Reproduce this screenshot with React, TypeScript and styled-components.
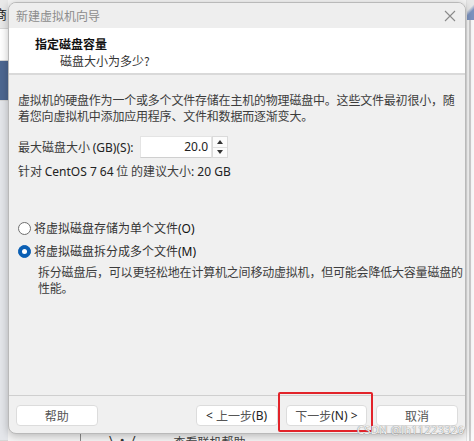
import React from "react";
import styled, { createGlobalStyle } from "styled-components";

const Global = createGlobalStyle`
  html, body { margin: 0; padding: 0; }
  body { background: #eef0f3; font-family: "Noto Sans", "Noto Sans CJK SC", sans-serif; }
`;

const CJK = `"Noto Sans CJK SC", "Noto Sans", sans-serif`;
const LATIN = `"Noto Sans", "DejaVu Sans", "Noto Sans CJK SC", sans-serif`;

const Stage = styled.div`
  position: relative;
  width: 474px;
  height: 441px;
  overflow: hidden;
  background: #f4f4f4;
`;

/* background application fragments (under the dialog) */
const BackApp = styled.div`
  display: grid;
  grid-template-columns: 8px 1fr 8px;
  height: 100%;
`;

const LeftStrip = styled.div`
  display: flex;
  flex-direction: column;
  overflow: hidden;
`;

const StripBlock = styled.div<{ $h: number; $bg: string }>`
  height: ${(p) => p.$h}px;
  background: ${(p) => p.$bg};
  border-bottom: 1px solid #d6d6d6;
  font-family: ${CJK};
  font-size: 13px;
  color: #222;
  line-height: ${(p) => p.$h}px;
  text-indent: -6px;
  white-space: nowrap;
`;

const MidBack = styled.div`
  display: flex;
  flex-direction: column;
  justify-content: flex-end;
  background: #f4f4f4;
`;

const BottomPeek = styled.div`
  display: flex;
  align-items: flex-start;
  height: 7px;
  overflow: visible;
`;

const PeekDivider = styled.div`
  width: 72px;
  border-right: 1px solid #8a8a8a;
  height: 12px;
`;

const PeekIcon = styled.div`
  margin-left: 28px;
  font-family: ${LATIN};
  font-size: 13px;
  line-height: 12px;
  color: #333;
  letter-spacing: 6px;
`;

const PeekText = styled.div`
  margin-left: 32px;
  font-family: ${CJK};
  font-size: 12px;
  line-height: 14px;
  margin-top: 1px;
  color: #444;
`;

const RightStrip = styled.div`
  display: flex;
  flex-direction: column;
  background: #fafafa;
  border-left: 1px solid #e2e2e2;
`;

const RightTop = styled.div`
  height: 20px;
  background: linear-gradient(135deg, #e8e8e8 40%, #7c93c0 60%);
`;

const RightLine = styled.div`
  flex: 1;
  border-right: 2px solid #cfcfcf;
  margin-right: 3px;
`;

/* the dialog window */
const Dialog = styled.div`
  position: absolute;
  left: 8px;
  top: 2px;
  width: 458px;
  height: 432px;
  box-sizing: border-box;
  border: 1px solid #b9b9b9;
  border-radius: 8px;
  overflow: hidden;
  background: #f0f0f0;
  box-shadow: 0 2px 8px rgba(0, 0, 0, 0.25);
  display: flex;
  flex-direction: column;
`;

const TitleBar = styled.div`
  height: 25px;
  display: flex;
  align-items: center;
  justify-content: space-between;
  padding: 0 9px 0 7px;
  background: #eeeeee;
`;

const TitleText = styled.div`
  font-family: ${CJK};
  font-size: 12px;
  color: #8c8c8c;
`;

const CloseIcon = styled.svg`
  width: 12px;
  height: 12px;
`;

const Header = styled.div`
  height: 47px;
  box-sizing: border-box;
  background: #ffffff;
  border-bottom: 2px solid #d9d9d9;
  padding: 7px 0 0 26px;
  display: flex;
  flex-direction: column;
`;

const HeaderTitle = styled.div`
  font-family: ${CJK};
  font-size: 12px;
  font-weight: 700;
  line-height: 17px;
  color: #111;
`;

const HeaderSub = styled.div`
  font-family: ${CJK};
  font-size: 12px;
  line-height: 17px;
  padding-left: 25px;
  color: #333;
`;

const Body = styled.div`
  flex: 1;
  padding: 17px 0 0 9px;
  display: flex;
  flex-direction: column;
  border-bottom: 1px solid #cfcfcf;
`;

const Para = styled.p`
  margin: 0;
  font-family: ${CJK};
  font-size: 12px;
  line-height: 16px;
  letter-spacing: -0.2px;
  color: #3c3c3c;
  white-space: nowrap;
`;

const Mixed = styled.span`
  font-family: ${LATIN};
  font-size: 12px;
  letter-spacing: 0;
  color: #222;
`;

const SizeRow = styled.div`
  margin-top: 12px;
  display: flex;
  align-items: center;
  height: 22px;
`;

const SizeLabel = styled.span`
  font-family: ${CJK};
  font-size: 12px;
  color: #3c3c3c;
  width: 122px;
`;

const Spin = styled.div`
  display: flex;
  height: 22px;
`;

const SpinInput = styled.div`
  width: 72px;
  box-sizing: border-box;
  background: #fff;
  border: 1px solid #e4e4e4;
  border-bottom-color: #cfcfcf;
  font-family: ${LATIN};
  font-size: 12px;
  color: #222;
  text-align: right;
  padding-right: 3px;
  line-height: 20px;
`;

const SpinButtons = styled.div`
  display: flex;
  flex-direction: column;
  width: 16px;
  box-sizing: border-box;
  border: 1px solid #dadada;
  background: #fbfbfb;
`;

const SpinHalf = styled.div`
  flex: 1;
  display: flex;
  align-items: center;
  justify-content: center;
  & + & { border-top: 1px solid #e0e0e0; }
`;

const Arrow = styled.div<{ $up?: boolean }>`
  width: 0;
  height: 0;
  border-left: 3px solid transparent;
  border-right: 3px solid transparent;
  ${(p) => (p.$up ? "border-bottom: 4px solid #333;" : "border-top: 4px solid #333;")}
`;

const Recommend = styled(Para)`
  margin-top: 5px;
  letter-spacing: 0;
`;

const Options = styled.div`
  margin-top: 40px;
  display: flex;
  flex-direction: column;
  gap: 7px;
`;

const RadioRow = styled.label`
  display: flex;
  align-items: center;
  gap: 3px;
  height: 16px;
  font-family: ${CJK};
  font-size: 12px;
  color: #333;
`;

const RadioText = styled.span`
  white-space: nowrap;
`;

const RadioDot = styled.span<{ $on?: boolean }>`
  width: 13px;
  height: 13px;
  box-sizing: border-box;
  border-radius: 50%;
  display: inline-flex;
  align-items: center;
  justify-content: center;
  background: ${(p) => (p.$on ? "#0a5fb4" : "#fff")};
  border: 1px solid ${(p) => (p.$on ? "#0a5fb4" : "#6f6f6f")};
  &::after {
    content: "";
    width: 5px;
    height: 5px;
    border-radius: 50%;
    background: ${(p) => (p.$on ? "#fff" : "transparent")};
  }
`;

const Mnemonic = styled.span`
  font-family: ${LATIN};
  font-size: 12px;
  color: #111;
`;

const Desc = styled(Para)`
  margin-top: 5px;
  padding-left: 20px;
`;

const Footer = styled.div`
  height: 37px;
  box-sizing: border-box;
  padding: 9px 7px 0 7px;
  display: flex;
  align-items: flex-start;
`;

const Btn = styled.div<{ $gap?: number }>`
  width: 82px;
  height: 21px;
  box-sizing: border-box;
  margin-left: ${(p) => p.$gap ?? 0}px;
  background: #ffffff;
  border: 1px solid #dcdcdc;
  border-radius: 4px;
  display: flex;
  align-items: center;
  justify-content: center;
  font-family: ${CJK};
  font-size: 12px;
  color: #555;
  position: relative;
`;

const BtnLatin = styled.span`
  font-family: ${LATIN};
  color: #222;
`;

const Highlight = styled.div`
  position: absolute;
  left: -9px;
  top: -14px;
  width: 95px;
  height: 40px;
  box-sizing: border-box;
  border: 2px solid #e2232a;
  border-radius: 2px;
  pointer-events: none;
`;

const Watermark = styled.div`
  position: absolute;
  right: 10px;
  bottom: 5px;
  font-family: ${LATIN};
  font-size: 11px;
  line-height: 12px;
  color: rgba(255, 255, 255, 0.9);
  text-shadow: 0 0 1px #8a8a8a, 0 0 1px #8a8a8a;
  letter-spacing: 0.3px;
`;

export default function App() {
  return (
    <>
      <Global />
      <Stage>
        <BackApp>
          <LeftStrip>
            <StripBlock $h={28} $bg="#e9e9e9">商</StripBlock>
            <StripBlock $h={31} $bg="#ffffff" />
            <StripBlock $h={40} $bg="#4d6791" />
            <StripBlock $h={342} $bg="#e4e6ea" />
          </LeftStrip>
          <MidBack>
            <BottomPeek>
              <PeekDivider />
              <PeekIcon>\•/</PeekIcon>
              <PeekText>查看联机帮助</PeekText>
            </BottomPeek>
          </MidBack>
          <RightStrip>
            <RightTop />
            <RightLine />
          </RightStrip>
        </BackApp>

        <Dialog>
          <TitleBar>
            <TitleText>新建虚拟机向导</TitleText>
            <CloseIcon viewBox="0 0 12 12">
              <path d="M1 1 L11 11 M11 1 L1 11" stroke="#8a8a8a" strokeWidth="1.1" fill="none" />
            </CloseIcon>
          </TitleBar>
          <Header>
            <HeaderTitle>指定磁盘容量</HeaderTitle>
            <HeaderSub>磁盘大小为多少?</HeaderSub>
          </Header>
          <Body>
            <Para>
              虚拟机的硬盘作为一个或多个文件存储在主机的物理磁盘中。这些文件最初很小，随
              <br />
              着您向虚拟机中添加应用程序、文件和数据而逐渐变大。
            </Para>
            <SizeRow>
              <SizeLabel>
                最大磁盘大小 <Mixed>(GB)(S):</Mixed>
              </SizeLabel>
              <Spin>
                <SpinInput>20.0</SpinInput>
                <SpinButtons>
                  <SpinHalf>
                    <Arrow $up />
                  </SpinHalf>
                  <SpinHalf>
                    <Arrow />
                  </SpinHalf>
                </SpinButtons>
              </Spin>
            </SizeRow>
            <Recommend>
              针对 <Mixed>CentOS 7 64</Mixed> 位 的建议大小<Mixed>: 20 GB</Mixed>
            </Recommend>
            <Options>
              <RadioRow>
                <RadioDot />
                <RadioText>
                  将虚拟磁盘存储为单个文件<Mnemonic>(O)</Mnemonic>
                </RadioText>
              </RadioRow>
              <RadioRow>
                <RadioDot $on />
                <RadioText>
                  将虚拟磁盘拆分成多个文件<Mnemonic>(M)</Mnemonic>
                </RadioText>
              </RadioRow>
            </Options>
            <Desc>
              拆分磁盘后，可以更轻松地在计算机之间移动虚拟机，但可能会降低大容量磁盘的
              <br />
              性能。
            </Desc>
          </Body>
          <Footer>
            <Btn>帮助</Btn>
            <Btn $gap={98}>
              <BtnLatin>&lt;&nbsp;</BtnLatin>上一步<BtnLatin>(B)</BtnLatin>
            </Btn>
            <Btn $gap={8}>
              下一步<BtnLatin>(N) &gt;</BtnLatin>
              <Highlight />
            </Btn>
            <Btn $gap={9}>取消</Btn>
          </Footer>
        </Dialog>
        <Watermark>CSDN @lh11223326</Watermark>
      </Stage>
    </>
  );
}
